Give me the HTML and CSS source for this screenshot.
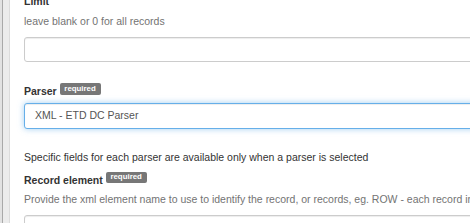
FILE: index.html
```html
<!DOCTYPE html>
<html>
<head>
    <meta charset="UTF-8">
    <title>Import settings</title>
    <link rel="stylesheet" href="styles.css">
</head>
<body>
    <div class="edge"></div>

    <div class="panel">
        <div class="form-group">
            <label class="control-label">Limit</label>
            <p class="help-block">leave blank or 0 for all records</p>
            <input class="form-control" type="text" value="">
        </div>

        <div class="form-group">
            <label class="control-label">Parser <span class="badge">required</span></label>
            <div class="form-control select is-focused">XML - ETD DC Parser</div>
        </div>

        <p class="parser-note">Specific fields for each parser are available only when a parser is selected</p>

        <div class="form-group">
            <label class="control-label">Record element <span class="badge">required</span></label>
            <p class="help-block">Provide the xml element name to use to identify the record, or records, eg. ROW - each record in</p>
            <input class="form-control" type="text" value="">
        </div>
    </div>
</body>
</html>
```

FILE: styles.css
```css
* {
    margin: 0;
    padding: 0;
    box-sizing: border-box;
}

body {
    display: flex;
    height: 223px;
    overflow: hidden;
    background: #fff;
    font-family: 'Liberation Sans', Arial, sans-serif;
    font-size: 10.5px;
    line-height: 15px;
    color: #333;
}

.edge {
    flex: 0 0 11px;
    background: linear-gradient(to right, #e2e2e2 0 2px, #a9a9a9 2px 3px, #ececec 3px 9px, #dcdcdc 9px 10px, #fff 10px);
}

.panel {
    flex: 0 0 620px;
    padding-left: 13px;
    margin-top: -6px;
}

.form-group {
    margin-bottom: 21px;
}

.control-label {
    display: block;
    font-weight: bold;
    margin-bottom: 5px;
}

.badge {
    display: inline-block;
    padding: 0.2em 0.6em 0.3em;
    font-size: 75%;
    font-weight: bold;
    line-height: 1;
    color: #fff;
    background: #777;
    border-radius: 0.25em;
    vertical-align: 4px;
}

.help-block {
    color: #737373;
    margin-bottom: 8px;
}

.form-control {
    display: block;
    width: 100%;
    height: 25px;
    padding: 0 10px;
    font: inherit;
    color: #555;
    background: #fff;
    border: 1px solid #ccc;
    border-radius: 3px;
    box-shadow: inset 0 1px 1px rgba(0, 0, 0, 0.075);
}

.select {
    height: 25.5px;
    line-height: 23.5px;
}

.is-focused {
    border-color: #66afe9;
    box-shadow: inset 0 1px 1px rgba(0, 0, 0, 0.075), 0 0 6px rgba(102, 175, 233, 0.6);
}

.form-group + .form-group .control-label {
    margin-bottom: 4.5px;
}

.parser-note {
    margin-top: 2px;
    margin-bottom: 7px;
}
```
